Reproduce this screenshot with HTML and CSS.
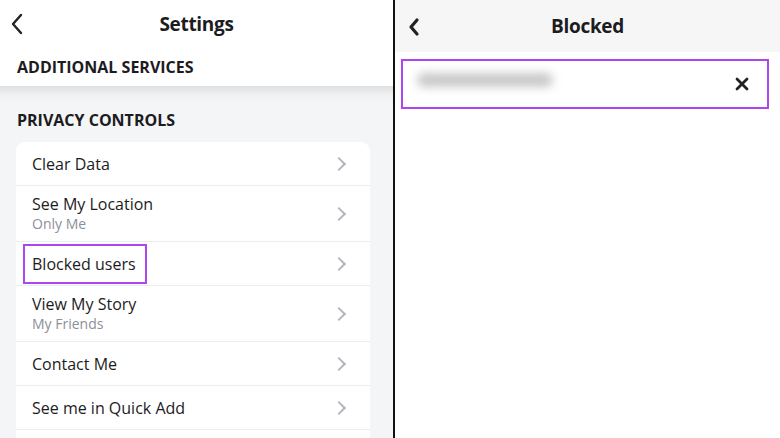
FILE: index.html
```html
<!DOCTYPE html>
<html lang="en">
<head>
    <meta charset="UTF-8">
    <meta name="viewport" content="width=device-width, initial-scale=1.0">
    <title>Settings / Blocked</title>
    <link rel="stylesheet" href="styles.css">
</head>
<body>
    <div class="screen settings">
        <div class="nav">
            <span class="back">
                <svg width="14" height="22" viewBox="0 0 14 22"><path d="M11 2 L3 11 L11 20" fill="none" stroke="#222" stroke-width="2.4" stroke-linecap="round" stroke-linejoin="round"/></svg>
            </span>
            <h1>Settings</h1>
            <span></span>
        </div>
        <div class="section-top">ADDITIONAL SERVICES</div>
        <div class="section-body">
            <h2>PRIVACY CONTROLS</h2>
            <ul class="card">
                <li class="row"><span class="label">Clear Data</span><span class="chev"></span></li>
                <li class="row tall"><span class="label">See My Location<small>Only Me</small></span><span class="chev"></span></li>
                <li class="row"><span class="label highlight">Blocked users</span><span class="chev"></span></li>
                <li class="row tall"><span class="label">View My Story<small>My Friends</small></span><span class="chev"></span></li>
                <li class="row"><span class="label">Contact Me</span><span class="chev"></span></li>
                <li class="row"><span class="label">See me in Quick Add</span><span class="chev"></span></li>
                <li class="row"><span class="label">&nbsp;</span></li>
            </ul>
        </div>
    </div>
    <div class="screen blocked">
        <div class="nav">
            <span class="back">
                <svg width="14" height="22" viewBox="0 0 14 22"><path d="M10 4 L4 11 L10 18" fill="none" stroke="#222" stroke-width="3.2" stroke-linecap="round" stroke-linejoin="round"/></svg>
            </span>
            <h1>Blocked</h1>
            <span></span>
        </div>
        <div class="list">
            <div class="blocked-row">
                <span class="blurred"></span>
                <svg class="remove" width="14" height="14" viewBox="0 0 14 14"><path d="M2 2 L12 12 M12 2 L2 12" stroke="#222" stroke-width="2.8" stroke-linecap="round"/></svg>
            </div>
        </div>
    </div>
</body>
</html>
```

FILE: styles.css
```css
body {
    margin: 0;
    width: 780px;
    height: 438px;
    overflow: hidden;
    display: flex;
    font-family: "Open Sans", "Noto Sans", Arial, sans-serif;
    color: #1c1c1e;
    background: #fff;
}
.screen {
    height: 100%;
    overflow: hidden;
}
.settings {
    width: 393px;
    background: #f4f5f7;
    border-right: 2px solid #111;
}
.blocked {
    flex: 1;
    background: #fff;
}
.nav {
    display: grid;
    grid-template-columns: 44px 1fr 44px;
    align-items: center;
    height: 47px;
    background: #fff;
}
.nav h1 {
    margin: 0;
    text-align: center;
    font-size: 19px;
    font-weight: 700;
    letter-spacing: -0.3px;
}
.back {
    display: flex;
    padding-left: 10px;
    padding-top: 1px;
}
.section-top {
    background: #fff;
    height: 39px;
    padding-left: 17px;
    font-size: 16px;
    font-weight: 700;
    line-height: 40px;
}
.section-body {
    background: linear-gradient(#dedfe1 0, #eeeff1 8px, #f4f5f7 16px);
    padding-top: 24px;
}
.section-body h2 {
    margin: 0 0 12px 17px;
    font-size: 16px;
    font-weight: 700;
    line-height: 20px;
}
.card {
    list-style: none;
    margin: 0 23px 0 16px;
    padding: 0;
    background: #fff;
    border-radius: 9px 9px 0 0;
}
.row {
    display: flex;
    align-items: center;
    justify-content: space-between;
    height: 43px;
    padding: 0 26px 0 16px;
    border-bottom: 1px solid #ececee;
    font-size: 16px;
}
.row.tall {
    height: 55px;
}
.label {
    display: flex;
    flex-direction: column;
    line-height: 20px;
}
.label small {
    font-size: 14px;
    color: #8b9099;
    line-height: 20px;
}
.highlight {
    margin-left: -9px;
    padding: 9px 9px 9px 7px;
    border: 2px solid #ad46ee;
    line-height: 18px;
}
.chev {
    width: 8px;
    height: 8px;
    border-top: 2.5px solid #b3b7bd;
    border-right: 2.5px solid #b3b7bd;
    transform: rotate(45deg);
}
.blocked .nav {
    height: 52px;
    background: #f6f6f6;
}
.blocked .back {
    padding-left: 12px;
}
.list {
    padding: 7px 11px 0 6px;
}
.blocked-row {
    display: flex;
    align-items: center;
    justify-content: space-between;
    height: 46px;
    padding: 0 18px 0 14px;
    border: 2px solid #ad46ee;
}
.blurred {
    width: 136px;
    height: 14px;
    margin-top: -9px;
    background: #c8c8c8;
    border-radius: 7px;
    filter: blur(5px);
}
```
